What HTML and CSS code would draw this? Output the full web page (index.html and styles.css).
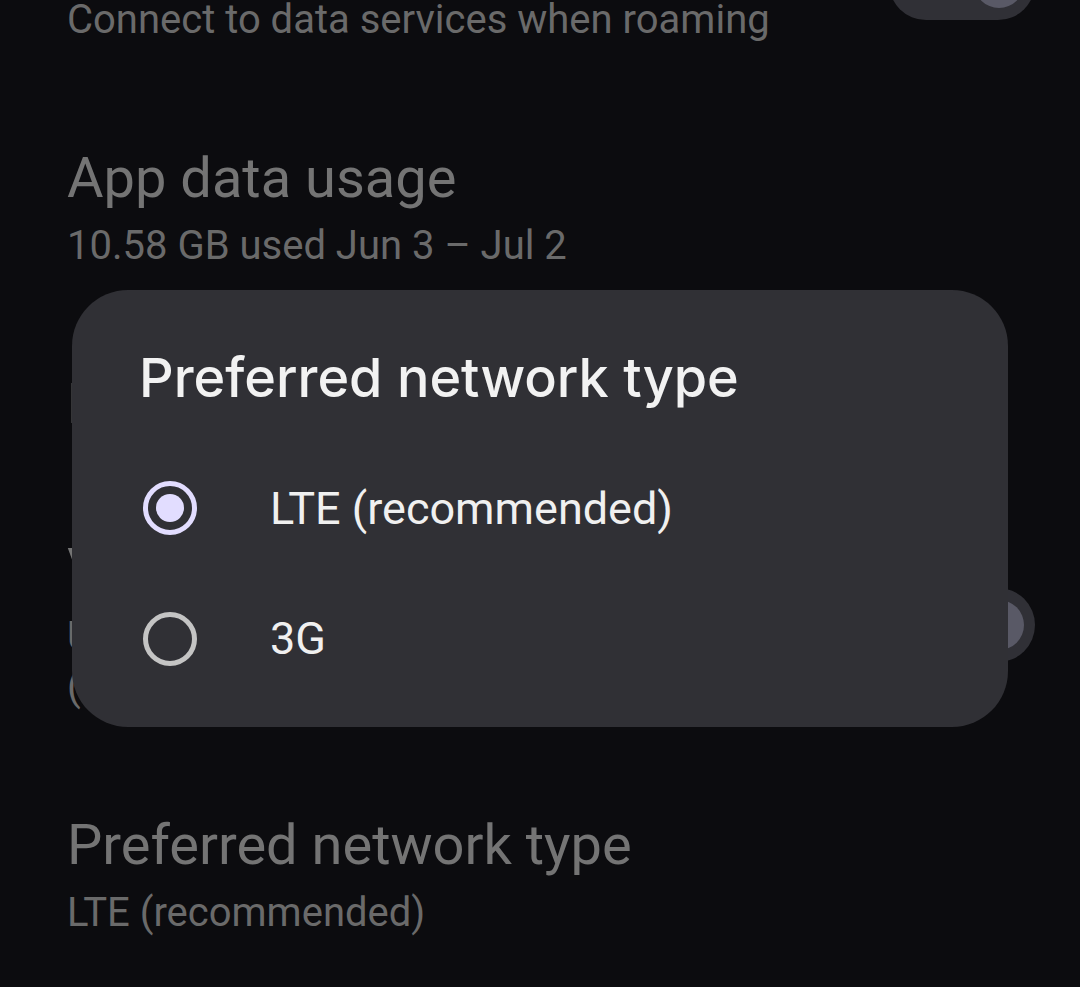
FILE: index.html
```html
<!DOCTYPE html>
<html lang="en">
<head>
<meta charset="utf-8">
<title>Preferred network type</title>
<link rel="stylesheet" href="styles.css">
</head>
<body>
<main class="list">
  <div class="row">
    <div class="texts">
      <div class="title">Roaming</div>
      <div class="sub">Connect to data services when roaming</div>
    </div>
    <div class="switch"><span class="thumb"></span></div>
  </div>
  <div class="row">
    <div class="texts">
      <div class="title">App data usage</div>
      <div class="sub">10.58 GB used Jun 3 – Jul 2</div>
    </div>
  </div>
  <div class="row">
    <div class="texts">
      <div class="title">Data warning &amp; limit</div>
    </div>
  </div>
  <div class="row">
    <div class="texts">
      <div class="title">VoLTE</div>
      <div class="sub">Use LTE services to improve voice and other communications<br>(recommended)</div>
    </div>
    <div class="switch"><span class="thumb"></span></div>
  </div>
  <div class="row">
    <div class="texts">
      <div class="title">Preferred network type</div>
      <div class="sub">LTE (recommended)</div>
    </div>
  </div>
</main>

<div class="scrim">
  <section class="dialog" role="dialog" aria-label="Preferred network type">
    <h2 class="dialog-title">Preferred network type</h2>
    <div class="option">
      <span class="radio checked"></span>
      <span class="option-label">LTE (recommended)</span>
    </div>
    <div class="option">
      <span class="radio"></span>
      <span class="option-label">3G</span>
    </div>
  </section>
</div>
</body>
</html>
```

FILE: styles.css
```css
html, body {
  margin: 0;
  padding: 0;
}
body {
  background: #0c0c0f;
  width: 1080px;
  height: 987px;
  overflow: hidden;
  font-family: Roboto, "Liberation Sans", sans-serif;
}
.list {
  margin-top: -131px;
}
.row {
  display: flex;
  align-items: center;
  padding: 51px 45px 50px 67px;
}
.texts {
  flex: 1;
  min-width: 0;
  overflow: hidden;
}
.title {
  font-size: 56px;
  line-height: 64px;
  color: #747474;
  white-space: nowrap;
}
.sub {
  margin-top: 11px;
  font-size: 40px;
  line-height: 50px;
  color: #6a6a6a;
  white-space: nowrap;
}
.switch {
  width: 146px;
  height: 74px;
  border-radius: 37px;
  background: #303036;
  display: flex;
  align-items: center;
  justify-content: flex-end;
  padding-right: 11px;
  box-sizing: border-box;
  flex: none;
}
.thumb {
  width: 50px;
  height: 50px;
  border-radius: 50%;
  background: #595966;
}
.scrim {
  position: fixed;
  inset: 0;
  display: flex;
  justify-content: center;
  align-items: flex-start;
  padding-top: 290px;
}
.dialog {
  width: 936px;
  height: 437px;
  box-sizing: border-box;
  background: #303035;
  border-radius: 56px;
  padding: 56px 0 0 67px;
}
.dialog-title {
  margin: 0 0 34px;
  font-family: Inter, Roboto, sans-serif;
  font-size: 54px;
  line-height: 64px;
  font-weight: 500;
  color: #f2f2f2;
}
.option {
  display: flex;
  align-items: center;
  height: 130px;
}
.radio {
  width: 54px;
  height: 54px;
  box-sizing: border-box;
  border-radius: 50%;
  border: 5px solid #c4c4c4;
  margin-left: 4px;
  margin-right: 73px;
  margin-top: -2px;
  display: flex;
  align-items: center;
  justify-content: center;
  flex: none;
}
.option + .option .radio {
  margin-top: 0;
}
.radio.checked {
  border-color: #e2ddff;
}
.radio.checked::after {
  content: "";
  width: 28px;
  height: 28px;
  border-radius: 50%;
  background: #e2ddff;
}
.option-label {
  font-size: 45px;
  line-height: 56px;
  color: #f0f0f0;
}
```
